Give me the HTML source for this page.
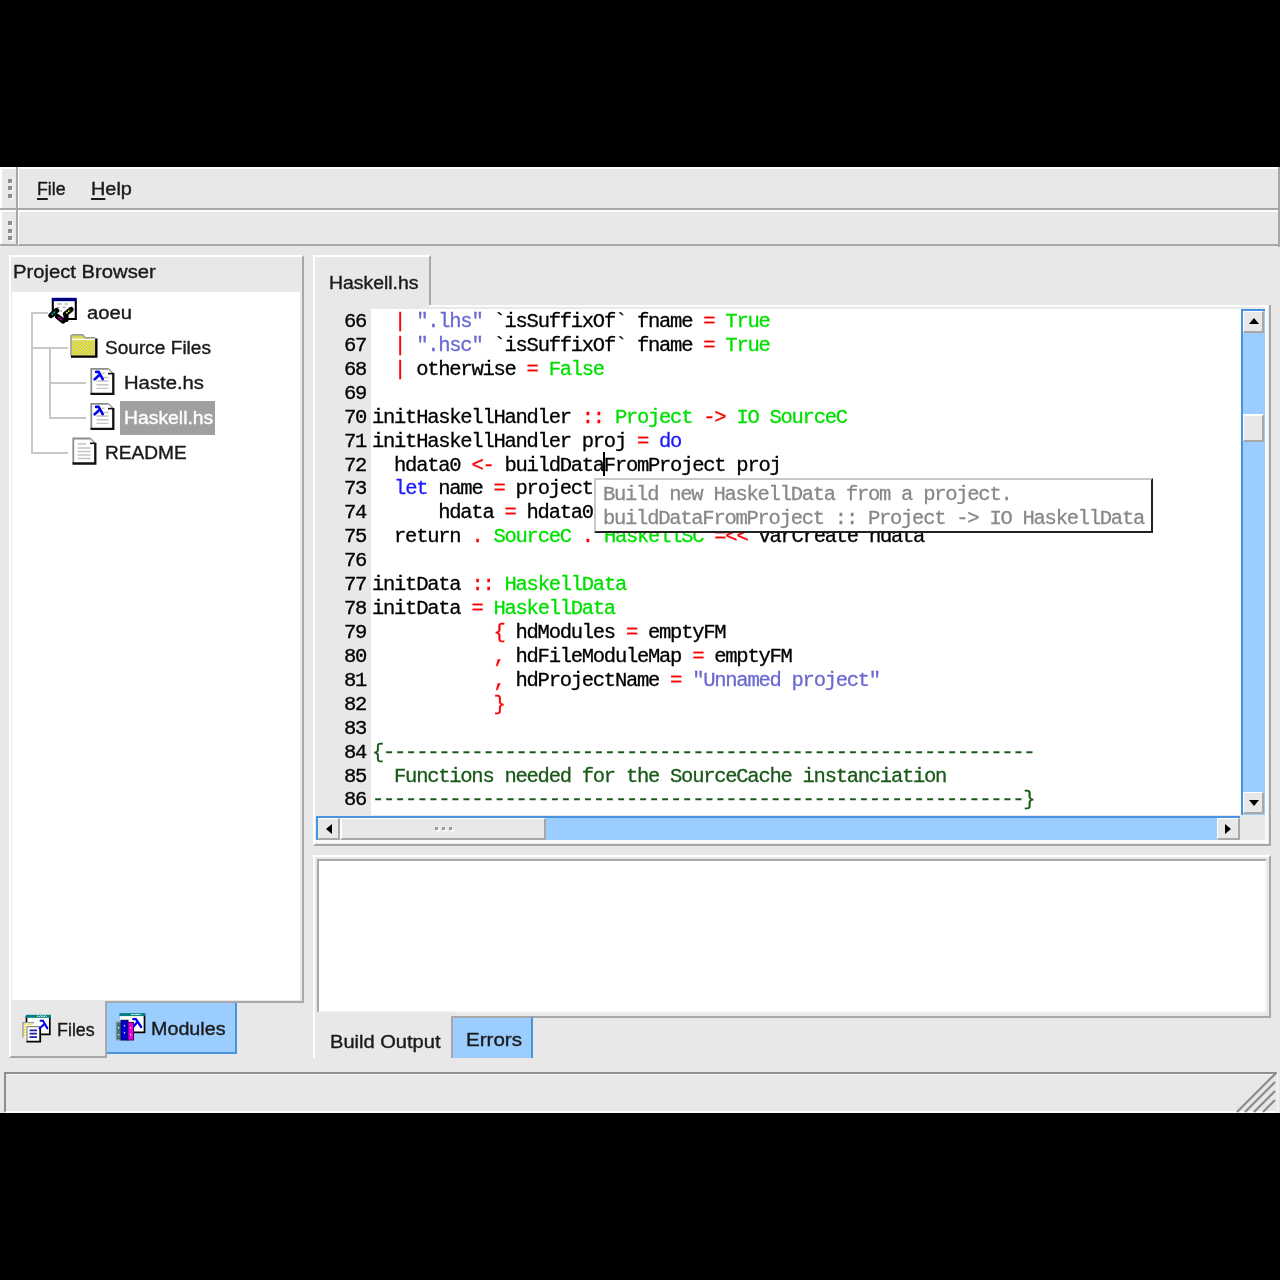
<!DOCTYPE html>
<html><head><meta charset="utf-8">
<style>
*{margin:0;padding:0;box-sizing:border-box}
html,body{width:1280px;height:1280px;overflow:hidden;background:#000}
body{position:relative;font-family:"Liberation Sans",sans-serif;font-size:16px;color:#1a1a1a}
.a{position:absolute}
body *{will-change:transform}
svg.a{overflow:visible}
.lbl{position:absolute;white-space:pre;transform-origin:0 0;line-height:1;-webkit-text-stroke:0.35px currentColor}
u{text-decoration:underline;text-decoration-thickness:2px;text-underline-offset:3px}
.code{position:absolute;font-family:"Liberation Mono",monospace;font-size:20.5px;letter-spacing:-1.262px;white-space:pre;line-height:23.92px;color:#000;-webkit-text-stroke:0.3px currentColor}
.ln{position:absolute;font-family:"Liberation Mono",monospace;font-size:20.5px;letter-spacing:-1.262px;white-space:pre;line-height:23.92px;color:#000;text-align:right;padding-right:5px;-webkit-text-stroke:0.3px currentColor}
</style></head><body>
<div class="a" style="left:0px;top:0px;width:1280px;height:167px;background:#000;"></div>
<div class="a" style="left:0px;top:1113px;width:1280px;height:167px;background:#000;"></div>
<div class="a" style="left:0px;top:167px;width:1280px;height:946px;background:#e8e8e8;"></div>
<div class="a" style="left:0px;top:167px;width:1280px;height:2px;background:#ffffff;"></div>
<div class="a" style="left:0px;top:167px;width:2px;height:42.5px;background:#ffffff;"></div>
<div class="a" style="left:1278px;top:167px;width:2px;height:42.5px;background:#a8a8a8;"></div>
<div class="a" style="left:0px;top:207.5px;width:1280px;height:2px;background:#a8a8a8;"></div>
<div class="a" style="left:16px;top:167px;width:2px;height:41.5px;background:#a8a8a8;"></div>
<div class="a" style="left:18px;top:169px;width:1px;height:38.5px;background:#ffffff;"></div>
<div class="a" style="left:7.5px;top:178.5px;width:3.5px;height:3.5px;background:#8c8c8c;box-shadow:1.5px 1.5px 0 #fff"></div>
<div class="a" style="left:7.5px;top:186.2px;width:3.5px;height:3.5px;background:#8c8c8c;box-shadow:1.5px 1.5px 0 #fff"></div>
<div class="a" style="left:7.5px;top:193.9px;width:3.5px;height:3.5px;background:#8c8c8c;box-shadow:1.5px 1.5px 0 #fff"></div>
<div class="a" style="left:0px;top:209.5px;width:1280px;height:2px;background:#ffffff;"></div>
<div class="a" style="left:0px;top:209.5px;width:2px;height:36.5px;background:#ffffff;"></div>
<div class="a" style="left:1278px;top:209.5px;width:2px;height:36.5px;background:#a8a8a8;"></div>
<div class="a" style="left:0px;top:244px;width:1280px;height:2px;background:#a8a8a8;"></div>
<div class="a" style="left:16px;top:209.5px;width:2px;height:35.5px;background:#a8a8a8;"></div>
<div class="a" style="left:18px;top:211.5px;width:1px;height:32.5px;background:#ffffff;"></div>
<div class="a" style="left:7.5px;top:221.0px;width:3.5px;height:3.5px;background:#8c8c8c;box-shadow:1.5px 1.5px 0 #fff"></div>
<div class="a" style="left:7.5px;top:228.7px;width:3.5px;height:3.5px;background:#8c8c8c;box-shadow:1.5px 1.5px 0 #fff"></div>
<div class="a" style="left:7.5px;top:236.4px;width:3.5px;height:3.5px;background:#8c8c8c;box-shadow:1.5px 1.5px 0 #fff"></div>
<div class="lbl" style="left:37px;top:181.16px;font-size:17.5px;color:#1a1a1a;transform:scaleX(1.0105)"><u>F</u>ile</div>
<div class="lbl" style="left:90.7px;top:181.16px;font-size:17.5px;color:#1a1a1a;transform:scaleX(1.1361)"><u>H</u>elp</div>
<div class="a" style="left:9px;top:255px;width:295px;height:748px;border-top:2px solid #ffffff;border-left:2px solid #ffffff;border-right:2px solid #a8a8a8;"></div>
<div class="a" style="left:105px;top:1001px;width:199px;height:2px;background:#a8a8a8;"></div>
<div class="a" style="left:11px;top:257px;width:291px;height:35px;background:#e8e8e8;"></div>
<div class="lbl" style="left:13px;top:263.66px;font-size:17.5px;color:#1a1a1a;transform:scaleX(1.1561)">Project Browser</div>
<div class="a" style="left:12px;top:292px;width:288px;height:708px;background:#ffffff;"></div>
<div class="a" style="left:31px;top:313px;width:2px;height:140.60000000000002px;background:#c8c8c8;"></div>
<div class="a" style="left:31px;top:312px;width:17px;height:2px;background:#c8c8c8;"></div>
<div class="a" style="left:31px;top:346.7px;width:37px;height:2px;background:#c8c8c8;"></div>
<div class="a" style="left:49px;top:347px;width:2px;height:72px;background:#c8c8c8;"></div>
<div class="a" style="left:49px;top:382px;width:37px;height:2px;background:#c8c8c8;"></div>
<div class="a" style="left:49px;top:417px;width:37px;height:2px;background:#c8c8c8;"></div>
<div class="a" style="left:31px;top:451.6px;width:37px;height:2px;background:#c8c8c8;"></div>
<div class="a" style="left:120px;top:401px;width:95px;height:34px;background:#a0a0a0;"></div>
<div class="lbl" style="left:87px;top:305.16px;font-size:17.5px;color:#1a1a1a;transform:scaleX(1.1557)">aoeu</div>
<div class="lbl" style="left:105px;top:340.16px;font-size:17.5px;color:#1a1a1a;transform:scaleX(1.0898)">Source Files</div>
<div class="lbl" style="left:123.7px;top:375.16px;font-size:17.5px;color:#1a1a1a;transform:scaleX(1.1569)">Haste.hs</div>
<div class="lbl" style="left:123.7px;top:410.16px;font-size:17.5px;color:#ffffff;transform:scaleX(1.1061)">Haskell.hs</div>
<div class="lbl" style="left:105px;top:444.76px;font-size:17.5px;color:#1a1a1a;transform:scaleX(1.0912)">README</div>
<svg class="a" style="left:0px;top:0px" width="1" height="1" viewBox="0 0 1 1"><rect x="53" y="300" width="23" height="19" fill="#fff"/><rect x="51.7" y="297.8" width="25.1" height="3.4" fill="#000080"/><path d="M52.8 301v11M75.8 301v19M62 319H76.8" stroke="#000" stroke-width="2.1" fill="none"/><path d="M57 304h5M64.5 304h3.5M57 307.5h3M62.5 307.5h3.5M58 311h4" stroke="#b8b8b8" stroke-width="1.3"/><path d="M51 315.5l5.5-5" stroke="#000" stroke-width="5.2" stroke-linecap="round"/><path d="M51.8 314.6l4-3.6" stroke="#00c8c8" stroke-width="1.8" stroke-dasharray="1.5 1"/><path d="M57.5 316.5l5.5 4.5" stroke="#000" stroke-width="5.2" stroke-linecap="round"/><path d="M58.3 317.2l4 3.2" stroke="#e000e0" stroke-width="1.8" stroke-dasharray="1.5 1"/><path d="M65.5 314l5.5-4.5M66 316v3.5" stroke="#000" stroke-width="5.2" stroke-linecap="round"/><path d="M66.3 313.2l4-3.4" stroke="#e8e800" stroke-width="1.8" stroke-dasharray="1.5 1"/></svg>
<svg class="a" style="left:0px;top:0px" width="1" height="1" viewBox="0 0 1 1"><defs><pattern id="dith" x="0" y="0" width="3" height="3" patternUnits="userSpaceOnUse"><rect width="3" height="3" fill="#f0f000"/><rect x="1.5" y="1.5" width="1.5" height="1.5" fill="#c0c0a8"/><rect x="0" y="0" width="1.5" height="1.5" fill="#c0c0a8"/></pattern></defs><path d="M71.5 338v-2.5l2-1.2h9l2.5 3h10v18.5H71.5z" fill="url(#dith)"/><path d="M71.5 339.4H95" stroke="#fff" stroke-width="1.5"/><path d="M71 356V336l1.8-1.3h9.8l2.6 3.1h10" stroke="#999" stroke-width="1.6" fill="none"/><path d="M96.3 338.5V357.5M71 356.6H97.3" stroke="#000" stroke-width="2.4" fill="none"/></svg>
<svg class="a" style="left:0px;top:0px" width="1" height="1" viewBox="0 0 1 1"><path d="M91.5 369h17l5 5v20H91.5z" fill="#fff"/><path d="M91.3 394V368.8H108.5" stroke="#8c8c8c" stroke-width="1.8" fill="none"/><path d="M108.5 368.8l4.5 4.5" stroke="#a0a0a0" stroke-width="1.4" fill="none"/><path d="M108.0 373.6H113.0" stroke="#111" stroke-width="1.6" fill="none"/><path d="M113.3 373V395M90.5 393.8H114.3" stroke="#111" stroke-width="2.3" fill="none"/><path d="M102.0 373.3h2.5M103.5 377.5h5M96.5 381h12M96.5 384.8h12M96.5 388.4h12" stroke="#c4c4c4" stroke-width="1.4"/><path d="M96.1 371.9H98.7L102.7 379.2M99.1 375.3L94.7 379.3" stroke="#0000f0" stroke-width="2.6" stroke-linecap="round" stroke-linejoin="round" fill="none"/></svg>
<svg class="a" style="left:0px;top:0px" width="1" height="1" viewBox="0 0 1 1"><path d="M91.5 404h17l5 5v20H91.5z" fill="#fff"/><path d="M91.3 429V403.8H108.5" stroke="#8c8c8c" stroke-width="1.8" fill="none"/><path d="M108.5 403.8l4.5 4.5" stroke="#a0a0a0" stroke-width="1.4" fill="none"/><path d="M108.0 408.6H113.0" stroke="#111" stroke-width="1.6" fill="none"/><path d="M113.3 408V430M90.5 428.8H114.3" stroke="#111" stroke-width="2.3" fill="none"/><path d="M102.0 408.3h2.5M103.5 412.5h5M96.5 416h12M96.5 419.8h12M96.5 423.4h12" stroke="#c4c4c4" stroke-width="1.4"/><path d="M96.1 406.9H98.7L102.7 414.2M99.1 410.3L94.7 414.3" stroke="#0000f0" stroke-width="2.6" stroke-linecap="round" stroke-linejoin="round" fill="none"/></svg>
<svg class="a" style="left:0px;top:0px" width="1" height="1" viewBox="0 0 1 1"><path d="M73.5 438.7h17l5 5v20H73.5z" fill="#fff"/><path d="M73.3 463.7V438.5H90.5" stroke="#8c8c8c" stroke-width="1.8" fill="none"/><path d="M90.5 438.5l4.5 4.5" stroke="#a0a0a0" stroke-width="1.4" fill="none"/><path d="M90.0 443.3H95.0" stroke="#111" stroke-width="1.6" fill="none"/><path d="M95.3 442.7V464.7M72.5 463.5H96.3" stroke="#111" stroke-width="2.3" fill="none"/><path d="M77.5 444.0h8.6M77.5 448.0h13M77.5 451.5h13M77.5 455.0h13M77.5 458.5h13" stroke="#c4c4c4" stroke-width="1.4"/></svg>
<div class="a" style="left:9px;top:1001px;width:97px;height:57px;border-left:2px solid #ffffff;border-bottom:2px solid #a8a8a8;"></div>
<div class="a" style="left:106px;top:1003px;width:131px;height:51px;background:#9ccdff;border-bottom:2px solid #4a93e0;border-right:2px solid #4a93e0;"></div>
<div class="a" style="left:105px;top:1001px;width:2px;height:57px;background:#a8a8a8;"></div>
<div class="a" style="left:237px;top:1001px;width:67px;height:2px;background:#a8a8a8;"></div>
<div class="lbl" style="left:57px;top:1021.91px;font-size:17.5px;color:#1a1a1a;transform:scaleX(1.0216)">Files</div>
<div class="lbl" style="left:151px;top:1020.66px;font-size:17.5px;color:#1a1a1a;transform:scaleX(1.1261)">Modules</div>
<svg class="a" style="left:0px;top:0px" width="1" height="1" viewBox="0 0 1 1"><rect x="26.5" y="1015.5" width="23.5" height="19" fill="#fff"/><path d="M26.5 1016v7M49.8 1016v19M40 1034.4H50.6" stroke="#000" stroke-width="1.7" fill="none"/><rect x="25.8" y="1014.8" width="25.2" height="3" fill="#008080"/><path d="M37 1016.8l1.2-1.2 1.2 1.2 1.2-1.2 1.2 1.2 1.2-1.2 1.2 1.2 1.2-1.2 1.2 1.2" stroke="#fff" stroke-width="0.9" fill="none"/><rect x="23" y="1022.8" width="11" height="14.5" fill="#fff"/><path d="M23 1037.5V1022.6H34" stroke="#999" stroke-width="1.4" fill="none"/><path d="M24.8 1036V1024.3H33" stroke="#e4e400" stroke-width="1.6" stroke-dasharray="1.6 1.2" fill="none"/><rect x="27" y="1026.6" width="13" height="15" fill="#fff"/><path d="M27 1042V1026.6H40" stroke="#888" stroke-width="1.2" fill="none"/><path d="M40.2 1027v15.2M26.5 1041.6H41" stroke="#000" stroke-width="1.8" fill="none"/><path d="M29.5 1030.3h7.5M29.5 1033.7h7.5M29.5 1037.2h7.5" stroke="#2020a8" stroke-width="1.7"/><path d="M40.6 1020.8H43L47.3 1028.3M44 1024.5L39.6 1028.3" stroke="#0000f0" stroke-width="2.1" stroke-linecap="round" fill="none"/></svg>
<svg class="a" style="left:0px;top:0px" width="1" height="1" viewBox="0 0 1 1"><rect x="120" y="1014" width="24.5" height="18.5" fill="#fff"/><path d="M144.5 1014v19M131 1032.4H145.3" stroke="#000" stroke-width="1.7" fill="none"/><rect x="119.4" y="1013.1" width="25.7" height="3" fill="#008080"/><path d="M131 1015.1l1.2-1.2 1.2 1.2 1.2-1.2 1.2 1.2 1.2-1.2 1.2 1.2 1.2-1.2 1.2 1.2" stroke="#fff" stroke-width="0.9" fill="none"/><path d="M133.3 1019.2h2.6l5.3 7.8M136.7 1022.8l-3.6 4.2" stroke="#0000f0" stroke-width="2.3" stroke-linecap="round" fill="none"/><rect x="116.2" y="1022" width="4.8" height="18" fill="#3c7878" stroke="#9a9a9a" stroke-width="1"/><path d="M118.6 1027v1.5M118.6 1034v1.5" stroke="#dfe" stroke-width="1.2"/><rect x="121" y="1020.3" width="7" height="19.7" fill="#0000d8" stroke="#000040" stroke-width="1"/><path d="M124.5 1025v1.5M124.5 1032v1.5" stroke="#ccf" stroke-width="1.3"/><rect x="128" y="1022.4" width="5.5" height="17.6" fill="#e000e0" stroke="#500050" stroke-width="1"/><path d="M130.7 1027v1.5M130.7 1034v1.5" stroke="#fcf" stroke-width="1.2"/></svg>
<div class="a" style="left:313px;top:255px;width:118px;height:52px;background:#e8e8e8;border-top:2px solid #ffffff;border-left:2px solid #ffffff;border-right:2px solid #a8a8a8;"></div>
<div class="lbl" style="left:329px;top:274.91px;font-size:17.5px;color:#1a1a1a;transform:scaleX(1.1086)">Haskell.hs</div>
<div class="a" style="left:313px;top:305px;width:958px;height:541px;border-left:2px solid #ffffff;border-bottom:2px solid #a8a8a8;border-right:2px solid #a8a8a8;"></div>
<div class="a" style="left:429px;top:305px;width:840px;height:2px;background:#fafafa;"></div>
<div class="a" style="left:315px;top:307px;width:56px;height:508px;background:#e8e8e8;"></div>
<div class="a" style="left:371px;top:309px;width:871px;height:506px;background:#ffffff;"></div>
<div class="a" style="left:1265px;top:306px;width:3px;height:537px;background:#fafafa;"></div>
<div class="a" style="left:315px;top:840px;width:953px;height:3px;background:#fafafa;"></div>
<div class="a" style="left:1241px;top:309px;width:24px;height:506px;background:#9ccdff;border-left:2px solid #4a93e0;border-top:2px solid #4a93e0;"></div>
<div class="a" style="left:1243px;top:311px;width:21px;height:22px;background:#e8e8e8;border-bottom:2px solid #a8a8a8;border-right:2px solid #a8a8a8;border-left:1px solid #fff;border-top:1px solid #fff;"></div>
<div class="a" style="left:1243px;top:414px;width:21px;height:28px;background:#e8e8e8;border-bottom:2px solid #a8a8a8;border-right:2px solid #a8a8a8;border-left:1px solid #fff;border-top:2px solid #fff;"></div>
<div class="a" style="left:1243px;top:792px;width:21px;height:22px;background:#e8e8e8;border-bottom:2px solid #a8a8a8;border-right:2px solid #a8a8a8;border-left:1px solid #fff;border-top:1px solid #fff;"></div>
<svg class="a" style="left:1245.5px;top:313px" width="16" height="16" viewBox="0 0 16 16"><path d="M3 11h10L8 5z" fill="#000"/></svg>
<svg class="a" style="left:1245.5px;top:795px" width="16" height="16" viewBox="0 0 16 16"><path d="M3 5h10L8 11z" fill="#000"/></svg>
<div class="a" style="left:316px;top:816px;width:924px;height:24px;background:#9ccdff;border-left:2px solid #4a93e0;border-top:2px solid #4a93e0;"></div>
<div class="a" style="left:318px;top:818px;width:22px;height:22px;background:#e8e8e8;border-bottom:2px solid #a8a8a8;border-right:2px solid #a8a8a8;border-top:1px solid #fff;"></div>
<div class="a" style="left:340px;top:818px;width:206px;height:22px;background:#e8e8e8;border-bottom:2px solid #a8a8a8;border-right:2px solid #a8a8a8;border-left:2px solid #fff;border-top:1px solid #fff;"></div>
<div class="a" style="left:1217px;top:818px;width:23px;height:22px;background:#e8e8e8;border-bottom:2px solid #a8a8a8;border-right:2px solid #a8a8a8;border-left:1px solid #fff;border-top:1px solid #fff;"></div>
<svg class="a" style="left:321px;top:821px" width="16" height="16" viewBox="0 0 16 16"><path d="M11 3v10L5 8z" fill="#000"/></svg>
<svg class="a" style="left:1220px;top:821px" width="16" height="16" viewBox="0 0 16 16"><path d="M5 3v10L11 8z" fill="#000"/></svg>
<div class="a" style="left:434.5px;top:827px;width:3px;height:3px;background:#9a9a9a;box-shadow:1.5px 1.5px 0 #fff"></div>
<div class="a" style="left:441.5px;top:827px;width:3px;height:3px;background:#9a9a9a;box-shadow:1.5px 1.5px 0 #fff"></div>
<div class="a" style="left:448.5px;top:827px;width:3px;height:3px;background:#9a9a9a;box-shadow:1.5px 1.5px 0 #fff"></div>
<div class="a" style="left:313px;top:855px;width:958px;height:162px;border-top:2px solid #ffffff;border-left:2px solid #ffffff;border-right:2px solid #a8a8a8;"></div>
<div class="a" style="left:451px;top:1016px;width:820px;height:2px;background:#a8a8a8;"></div>
<div class="a" style="left:317px;top:859px;width:950px;height:154px;background:#ffffff;border-top:2px solid #a8a8a8;border-left:2px solid #a8a8a8;border-bottom:2px solid #f2f2f2;border-right:2px solid #f2f2f2;"></div>
<div class="a" style="left:313px;top:1012px;width:138px;height:46px;background:#e8e8e8;border-left:2px solid #ffffff;"></div>
<div class="a" style="left:451px;top:1016px;width:82px;height:42px;background:#9ccdff;border-left:2px solid #a8a8a8;border-right:2px solid #4a93e0;border-top:2px solid #a8a8a8;"></div>
<div class="lbl" style="left:329.5px;top:1033.66px;font-size:17.5px;color:#1a1a1a;transform:scaleX(1.1473)">Build Output</div>
<div class="lbl" style="left:465.75px;top:1032.16px;font-size:17.5px;color:#1a1a1a;transform:scaleX(1.1755)">Errors</div>
<div class="a" style="left:3.5px;top:1072px;width:1273.5px;height:41px;background:#e8e8e8;border-top:2px solid #8e8e8e;border-left:2px solid #8e8e8e;border-bottom:2px solid #fbfbfb;"></div>
<div class="a" style="left:5.5px;top:1074px;width:1270.5px;height:1px;background:#f4f4f4;"></div>
<div class="a" style="left:1277px;top:1072px;width:1px;height:41px;background:#f6f6f6;"></div>
<svg class="a" style="left:0px;top:0px" width="1" height="1" viewBox="0 0 1 1"><path d="M1276 1073L1237 1112M1275 1082L1245 1112M1275 1091L1254 1112M1275 1100L1263 1112" stroke="#8e8e8e" stroke-width="2.4"/></svg>
<div class="a" style="left:371px;top:309px;width:871px;height:506px;overflow:hidden"><div class="code" style="left:1px;top:1px"><span style="color:#000">  </span><span style="color:#ff0000">|</span><span style="color:#000"> </span><span style="color:#6a6ad0">&quot;.lhs&quot;</span><span style="color:#000"> `isSuffixOf` fname </span><span style="color:#ff0000">=</span><span style="color:#000"> </span><span style="color:#00e000">True</span>
<span style="color:#000">  </span><span style="color:#ff0000">|</span><span style="color:#000"> </span><span style="color:#6a6ad0">&quot;.hsc&quot;</span><span style="color:#000"> `isSuffixOf` fname </span><span style="color:#ff0000">=</span><span style="color:#000"> </span><span style="color:#00e000">True</span>
<span style="color:#000">  </span><span style="color:#ff0000">|</span><span style="color:#000"> otherwise </span><span style="color:#ff0000">=</span><span style="color:#000"> </span><span style="color:#00e000">False</span>

<span style="color:#000">initHaskellHandler </span><span style="color:#ff0000">::</span><span style="color:#000"> </span><span style="color:#00e000">Project</span><span style="color:#000"> </span><span style="color:#ff0000">-&gt;</span><span style="color:#000"> </span><span style="color:#00e000">IO SourceC</span>
<span style="color:#000">initHaskellHandler proj </span><span style="color:#ff0000">=</span><span style="color:#000"> </span><span style="color:#1a1aff">do</span>
<span style="color:#000">  hdata0 </span><span style="color:#ff0000">&lt;-</span><span style="color:#000"> buildDataFromProject proj</span>
<span style="color:#000">  </span><span style="color:#1a1aff">let</span><span style="color:#000"> name </span><span style="color:#ff0000">=</span><span style="color:#000"> projectName proj</span>
<span style="color:#000">      hdata </span><span style="color:#ff0000">=</span><span style="color:#000"> hdata0 { hdProjectName = name }</span>
<span style="color:#000">  return </span><span style="color:#ff0000">.</span><span style="color:#000"> </span><span style="color:#00e000">SourceC</span><span style="color:#000"> </span><span style="color:#ff0000">.</span><span style="color:#000"> </span><span style="color:#00e000">HaskellSC</span><span style="color:#000"> </span><span style="color:#ff0000">=&lt;&lt;</span><span style="color:#000"> varCreate hdata</span>

<span style="color:#000">initData </span><span style="color:#ff0000">::</span><span style="color:#000"> </span><span style="color:#00e000">HaskellData</span>
<span style="color:#000">initData </span><span style="color:#ff0000">=</span><span style="color:#000"> </span><span style="color:#00e000">HaskellData</span>
<span style="color:#000">           </span><span style="color:#ff0000">{</span><span style="color:#000"> hdModules </span><span style="color:#ff0000">=</span><span style="color:#000"> emptyFM</span>
<span style="color:#000">           </span><span style="color:#ff0000">,</span><span style="color:#000"> hdFileModuleMap </span><span style="color:#ff0000">=</span><span style="color:#000"> emptyFM</span>
<span style="color:#000">           </span><span style="color:#ff0000">,</span><span style="color:#000"> hdProjectName </span><span style="color:#ff0000">=</span><span style="color:#000"> </span><span style="color:#6a6ad0">&quot;Unnamed project&quot;</span>
<span style="color:#000">           </span><span style="color:#ff0000">}</span>

<span style="color:#185818">{-----------------------------------------------------------</span>
<span style="color:#185818">  Functions needed for the SourceCache instanciation</span>
<span style="color:#185818">-----------------------------------------------------------}</span></div></div>
<div class="ln" style="left:317px;top:310px;width:54px;height:506px;overflow:hidden">66
67
68
69
70
71
72
73
74
75
76
77
78
79
80
81
82
83
84
85
86</div>
<div class="a" style="left:603px;top:452px;width:2px;height:24px;background:#000;"></div>
<div class="a" style="left:594px;top:478px;width:559px;height:55px;background:#ffffff;border-top:2px solid #c8c8c8;border-left:2px solid #c8c8c8;border-right:2px solid #222;border-bottom:2px solid #222;"></div>
<div class="code" style="left:603px;top:482.5px;color:#888">Build new HaskellData from a project.
buildDataFromProject :: Project -&gt; IO HaskellData</div>
</body></html>
